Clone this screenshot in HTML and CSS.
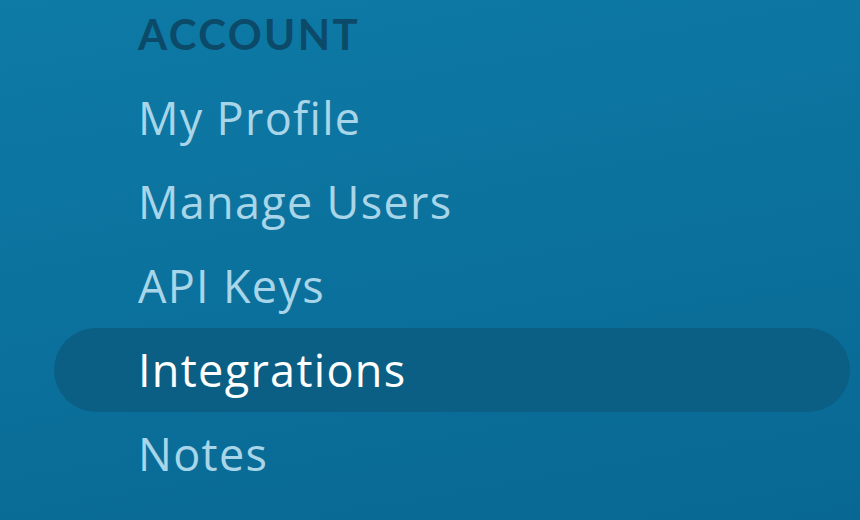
FILE: index.html
```html
<!DOCTYPE html>
<html lang="en">
<head>
<meta charset="utf-8">
<title>Account</title>
<link rel="stylesheet" href="styles.css">
</head>
<body>
<nav class="sidebar">
  <h2 class="section-title">ACCOUNT</h2>
  <ul class="menu">
    <li class="menu-item">My Profile</li>
    <li class="menu-item">Manage Users</li>
    <li class="menu-item">API Keys</li>
    <li class="menu-item active">Integrations</li>
    <li class="menu-item">Notes</li>
  </ul>
</nav>
</body>
</html>
```
FILE: styles.css
```css
html, body {
  margin: 0;
  padding: 0;
  height: 100%;
}
body {
  background: linear-gradient(170deg, #0e7aa6 0%, #086893 100%);
  font-family: "Open Sans", "Noto Sans", sans-serif;
  font-variant-ligatures: none;
  overflow: hidden;
}
.sidebar {
  padding: 9px 10px 0 54px;
}
.section-title {
  margin: 0 0 17px 84px;
  font-family: "Lato", "Noto Sans", sans-serif;
  font-size: 42px;
  line-height: 50px;
  font-weight: 700;
  letter-spacing: 2.4px;
  color: #0b4a68;
}
.menu {
  list-style: none;
  margin: 0;
  padding: 0;
}
.menu-item {
  height: 84px;
  line-height: 84px;
  padding-left: 84px;
  border-radius: 42px;
  font-size: 45px;
  letter-spacing: 1.3px;
  color: #a8d5e8;
}
.menu-item.active {
  background: #0b5f84;
  color: #ffffff;
}
```
